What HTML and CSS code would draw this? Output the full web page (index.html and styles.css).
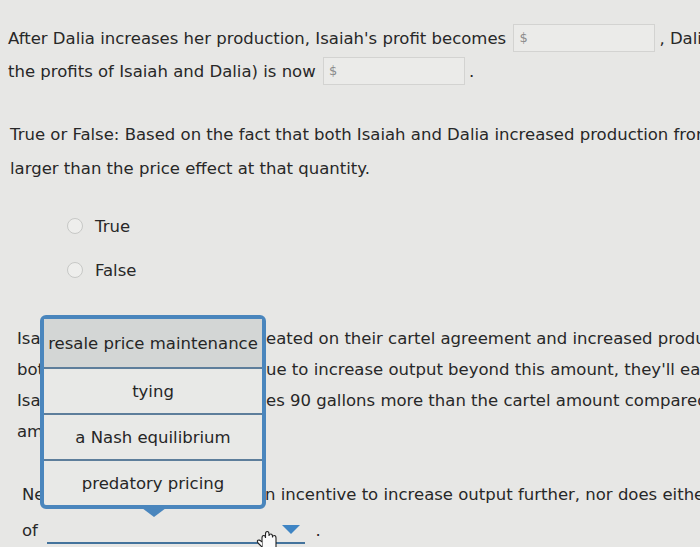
FILE: index.html
```html
<!DOCTYPE html>
<html>
<head>
<meta charset="utf-8">
<link rel="stylesheet" href="styles.css">
</head>
<body>
<div class="page">
  <div class="prompt">
    <div class="line">After Dalia increases her production, Isaiah's profit becomes <span class="money"><span class="cur">$</span></span>, Dalia's profit becomes</div>
    <div class="line">the profits of Isaiah and Dalia) is now <span class="money"><span class="cur">$</span></span>.</div>
  </div>

  <div class="tf">
    <div class="line">True or False: Based on the fact that both Isaiah and Dalia increased production from the cartel quantity, the output effect is</div>
    <div class="line">larger than the price effect at that quantity.</div>
  </div>

  <div class="radios">
    <label class="radio"><span class="circle"></span>True</label>
    <label class="radio"><span class="circle"></span>False</label>
  </div>

  <div class="para">
    <div class="line"><span class="hid">Isaiah and Dalia have both ch</span>eated on their cartel agreement and increased production. If</div>
    <div class="line"><span class="hid">both Isaiah and Dalia contin</span>ue to increase output beyond this amount, they'll each earn less.</div>
    <div class="line"><span class="hid">Isaiah's profit when he produc</span>es 90 gallons more than the cartel amount compared to the</div>
    <div class="line">amount before.</div>
  </div>

  <div class="para2">
    <div class="line"><span class="hid">Neither Isaiah nor Dalia has a</span>n incentive to increase output further, nor does either have</div>
    <div class="line">of <span class="select"><span class="caret"></span></span> .</div>
  </div>

  <div class="popup">
    <div class="opt active">resale price maintenance</div>
    <div class="opt">tying</div>
    <div class="opt">a Nash equilibrium</div>
    <div class="opt">predatory pricing</div>
  </div>

  <svg class="hand" width="22" height="20" viewBox="0 0 22 20">
    <path d="M6 20 L6 8 Q6 5.5 7.8 5.5 Q9.5 5.5 9.5 8 L9.5 4 Q9.5 1.5 11.2 1.5 Q13 1.5 13 4 L13 6 Q13 4 14.7 4 Q16.5 4 16.5 6.5 L16.5 7.5 Q16.5 5.5 18.2 5.5 Q20 5.5 20 8 L20 20" fill="#fafafa" stroke="#222" stroke-width="1.1"/>
    <path d="M6 12 Q3 9 1.6 10.5 Q0.8 11.6 2.5 13.5 L6 17" fill="#fafafa" stroke="#222" stroke-width="1.1"/>
  </svg>
</div>
</body>
</html>
```

FILE: styles.css
```css
html, body {
  margin: 0;
  padding: 0;
}
body {
  background: #e7e7e5;
  color: #282828;
  font-family: "DejaVu Sans", Verdana, sans-serif;
  font-size: 16.5px;
}
.page {
  position: relative;
  width: 700px;
  height: 547px;
  overflow: hidden;
}
.line {
  white-space: nowrap;
}
.prompt {
  padding: 22px 0 0 8px;
  line-height: 33px;
}
.money {
  display: inline-block;
  width: 142px;
  height: 28px;
  box-sizing: border-box;
  border: 1px solid #d3d3d1;
  background: #ebebe9;
  vertical-align: middle;
  margin: -4px 4px 0 2px;
  line-height: 26px;
  padding-left: 5px;
  font-size: 13px;
  color: #8c8c8c;
  text-align: left;
}
.tf {
  margin-top: 30px;
  padding-left: 10px;
  line-height: 34px;
}
.radios {
  margin-top: 18px;
  display: flex;
  flex-direction: column;
}
.radio {
  height: 44px;
  display: flex;
  align-items: center;
  gap: 12px;
  padding-left: 67px;
}
.circle {
  width: 14px;
  height: 14px;
  border: 1.5px solid #c7c8c6;
  border-radius: 50%;
  background: #eeeeec;
}
.para {
  margin-top: 31px;
  padding-left: 17px;
  line-height: 31px;
}
.para2 {
  margin-top: 30px;
  padding-left: 22px;
  line-height: 36px;
}
.hid {
  display: inline-block;
  width: 249px;
  overflow: hidden;
  vertical-align: top;
}
.para2 .hid {
  width: 243px;
}
.select {
  position: relative;
  display: inline-block;
  width: 258px;
  height: 20px;
  border-bottom: 2px solid #44739c;
  vertical-align: -8px;
  margin: 0 5px 0 4px;
}
.caret {
  position: absolute;
  right: 5px;
  top: 3px;
  width: 0;
  height: 0;
  border-left: 9px solid transparent;
  border-right: 9px solid transparent;
  border-top: 9px solid #3f85c4;
}
.popup {
  position: absolute;
  left: 40px;
  top: 315px;
  width: 226px;
  box-sizing: border-box;
  border: 4px solid #4a86bd;
  border-radius: 6px;
  background: #e8e9e7;
  display: flex;
  flex-direction: column;
}
.popup::after {
  content: "";
  position: absolute;
  left: 98px;
  bottom: -12px;
  border-left: 12px solid transparent;
  border-right: 12px solid transparent;
  border-top: 9px solid #4a86bd;
}
.opt {
  height: 48px;
  display: flex;
  align-items: center;
  justify-content: center;
  white-space: nowrap;
  color: #262626;
}
.opt + .opt {
  border-top: 2px solid #5d7e9b;
  height: 44px;
}
.opt.active {
  background: #d3d6d5;
}
.hand {
  position: absolute;
  left: 256px;
  top: 530px;
}
```
